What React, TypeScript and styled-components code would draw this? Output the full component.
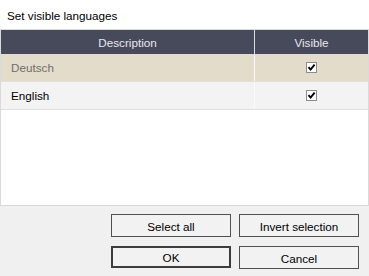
import styled, { createGlobalStyle } from "styled-components";

const GlobalStyle = createGlobalStyle`
  html, body {
    margin: 0;
    padding: 0;
    background: #ffffff;
  }
  body {
    font-family: "Liberation Sans", Arial, sans-serif;
    font-size: 11.7px;
  }
`;

const Dialog = styled.div`
  width: 369px;
  height: 276px;
  display: flex;
  flex-direction: column;
  background: #ffffff;
  overflow: hidden;
`;

const Title = styled.div`
  height: 29px;
  padding-left: 7px;
  display: flex;
  align-items: center;
  color: #000000;
  padding-top: 1px;
  box-sizing: border-box;
`;

const Grid = styled.div`
  flex: 1;
  border: 1px solid #dadada;
  border-bottom-color: #d8d8d8;
  background: #ffffff;
  display: flex;
  flex-direction: column;
`;

const Row = styled.div<{ $bg: string }>`
  display: grid;
  grid-template-columns: 254px 1fr;
  background: ${(p) => p.$bg};
  border-bottom: 1px solid #e0e0e0;
`;

const HeaderRow = styled.div`
  display: grid;
  grid-template-columns: 254px 1fr;
  height: 24px;
  background: #474a5a;
  color: #e8e8ee;
`;

const HeaderCell = styled.div<{ $divider?: boolean }>`
  display: flex;
  align-items: center;
  justify-content: center;
  border-right: ${(p) => (p.$divider ? "1px solid #dcdde2" : "none")};
`;

const Cell = styled.div<{ $muted?: boolean; $divider?: boolean }>`
  height: 27px;
  display: flex;
  align-items: center;
  padding-left: 10px;
  color: ${(p) => (p.$muted ? "#6e6e6e" : "#000000")};
  border-right: ${(p) => (p.$divider ? "1px solid #fafafa" : "none")};
`;

const CheckCell = styled.div`
  height: 27px;
  display: flex;
  align-items: center;
  justify-content: center;
`;

const Box = styled.span`
  width: 11px;
  height: 11px;
  box-sizing: border-box;
  border: 1px solid #8c8c8c;
  background: #ffffff;
  display: flex;
  align-items: center;
  justify-content: center;
`;

const Panel = styled.div`
  height: 70px;
  background: #f0f0f0;
  padding: 8px 10px 8px 0;
  box-sizing: border-box;
  display: flex;
  flex-direction: column;
  align-items: flex-end;
  gap: 9px;
`;

const ButtonRow = styled.div`
  display: flex;
  gap: 8px;
`;

const Button = styled.button<{ $default?: boolean }>`
  width: 120px;
  height: ${(p) => (p.$default ? "22px" : "23px")};
  box-sizing: border-box;
  background: #f2f2f2;
  border: ${(p) => (p.$default ? "2px solid #3c3c3c" : "1px solid #505050")};
  font-family: "Liberation Sans", Arial, sans-serif;
  font-size: 11.7px;
  color: #000000;
  padding: 0;
  padding-top: 1px;
`;

const Check = () => (
  <svg width="9" height="9" viewBox="0 0 9 9">
    <path d="M1.5 4.2 L3.6 6.6 L7.6 1.6" fill="none" stroke="#000" strokeWidth="1.9" />
  </svg>
);

const languages = [
  { name: "Deutsch", bg: "#e3dccb", muted: true },
  { name: "English", bg: "#f3f3f3", muted: false },
];

export default function App() {
  return (
    <>
      <GlobalStyle />
      <Dialog>
        <Title>Set visible languages</Title>
        <Grid>
          <HeaderRow>
            <HeaderCell $divider>Description</HeaderCell>
            <HeaderCell>Visible</HeaderCell>
          </HeaderRow>
          {languages.map((l) => (
            <Row key={l.name} $bg={l.bg}>
              <Cell $muted={l.muted} $divider>
                {l.name}
              </Cell>
              <CheckCell>
                <Box>
                  <Check />
                </Box>
              </CheckCell>
            </Row>
          ))}
        </Grid>
        <Panel>
          <ButtonRow>
            <Button>Select all</Button>
            <Button>Invert selection</Button>
          </ButtonRow>
          <ButtonRow>
            <Button $default>OK</Button>
            <Button>Cancel</Button>
          </ButtonRow>
        </Panel>
      </Dialog>
    </>
  );
}
